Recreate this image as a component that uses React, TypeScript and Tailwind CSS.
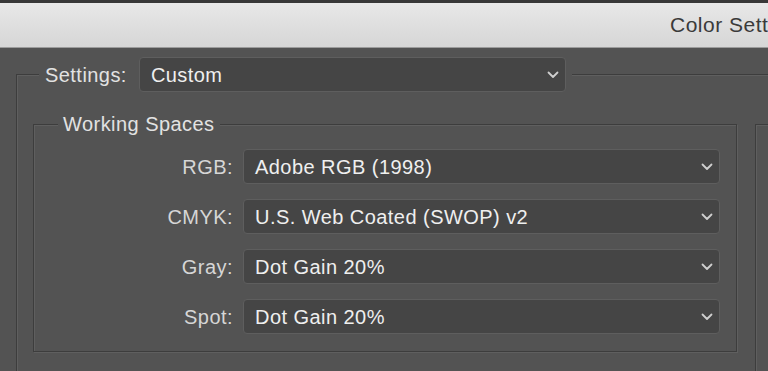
import React from 'react';

const Chevron: React.FC = () => (
  <svg width="12" height="8" viewBox="0 0 12 8" className="shrink-0">
    <path d="M1.5 1.5 L6 6 L10.5 1.5" fill="none" stroke="#cfcfcf" strokeWidth="1.8" strokeLinecap="round" strokeLinejoin="round" />
  </svg>
);

interface SelectBoxProps {
  value: string;
  className?: string;
}

const SelectBox: React.FC<SelectBoxProps> = ({ value, className = '' }) => (
  <div
    className={`flex h-[35px] items-center justify-between rounded-[4px] border border-[#5e5e5e] bg-[#454545] pl-[11px] pr-[6px] text-[#efefef] ${className}`}
  >
    <span>{value}</span>
    <Chevron />
  </div>
);

const rows = [
  { label: 'RGB:', value: 'Adobe RGB (1998)' },
  { label: 'CMYK:', value: 'U.S. Web Coated (SWOP) v2' },
  { label: 'Gray:', value: 'Dot Gain 20%' },
  { label: 'Spot:', value: 'Dot Gain 20%' },
];

export default function App() {
  return (
    <div
      className="flex h-[371px] w-[768px] flex-col overflow-hidden bg-[#535353] text-[20px] tracking-[0.45px]"
      style={{ fontFamily: '"Liberation Sans", Arial, sans-serif' }}
    >
      {/* window title bar, title runs past the right edge */}
      <div className="flex h-[48px] shrink-0 items-center overflow-hidden whitespace-nowrap border-t-[3px] border-b border-t-[#383838] border-b-[#9c9c9c] bg-gradient-to-b from-[#e8e8e8] to-[#d6d6d6] pl-[670px] text-[21px] tracking-[0.5px] text-[#3a3a3a]">
        Color Settings
      </div>

      {/* outer group: Settings */}
      <div className="ml-4 mt-[26px] h-[400px] w-[800px] shrink-0 border-l border-t border-[#3d3d3d] shadow-[inset_1px_1px_0_#5f5f5f]">
        <div className="-mt-[18px] ml-[22px] flex w-fit items-center gap-[12px] bg-[#535353] px-[6px]">
          <span className="text-[#e2e2e2]">Settings:</span>
          <SelectBox value="Custom" className="w-[427px]" />
        </div>

        <div className="ml-4 mt-[32px] flex gap-[18px]">
          {/* Working Spaces group */}
          <div className="h-[228px] w-[704px] shrink-0 border border-[#3d3d3d] shadow-[inset_1px_1px_0_#5f5f5f,1px_1px_0_#5f5f5f]">
            <div className="-mt-[13px] ml-[24px] w-fit bg-[#535353] px-[5px] leading-[24px] text-[#e2e2e2]">
              Working Spaces
            </div>
            <div className="mt-[13px] grid grid-cols-[199px_477px] items-center gap-x-[10px] gap-y-[15px]">
              {rows.map((r) => (
                <React.Fragment key={r.label}>
                  <span className="text-right text-[#d6d6d6]">{r.label}</span>
                  <SelectBox value={r.value} />
                </React.Fragment>
              ))}
            </div>
          </div>

          {/* next group, cut off at the window edge */}
          <div className="h-[300px] w-[200px] shrink-0 border-l border-t border-[#3d3d3d] shadow-[inset_1px_1px_0_#5f5f5f]" />
        </div>
      </div>
    </div>
  );
}
